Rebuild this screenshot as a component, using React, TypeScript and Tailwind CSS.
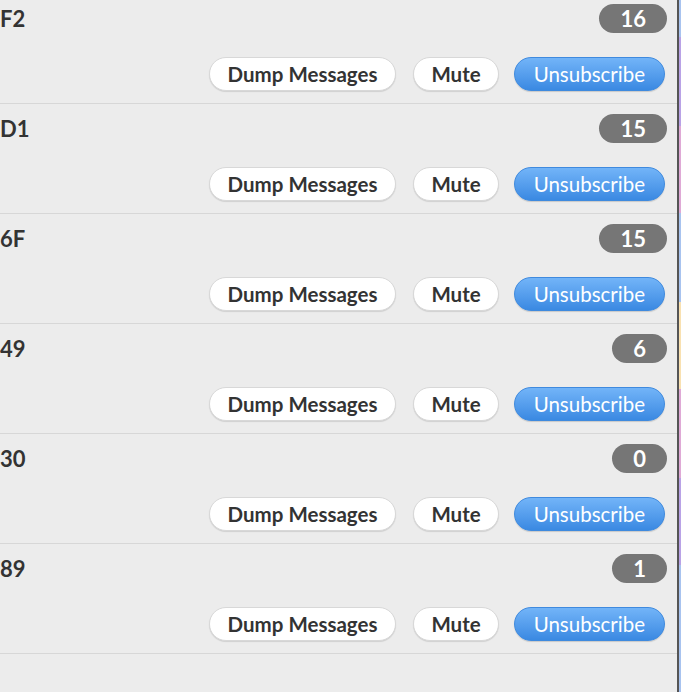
import React from 'react';

const rows = [
  { id: '4071F2', count: 16 },
  { id: '3518D1', count: 15 },
  { id: '92046F', count: 15 },
  { id: '870549', count: 6 },
  { id: '216530', count: 0 },
  { id: '604389', count: 1 },
];

const strip = [
  { h: 'h-[37px]', c: 'bg-[#a8c3ef]' },
  { h: 'h-[89px]', c: 'bg-[#b9a2e6]' },
  { h: 'h-[87px]', c: 'bg-[#dfa9d6]' },
  { h: 'h-[89px]', c: 'bg-[#a8c3ef]' },
  { h: 'h-[87px]', c: 'bg-[#f9e1b1]' },
  { h: 'h-[89px]', c: 'bg-[#dfa9d6]' },
  { h: 'h-[87px]', c: 'bg-[#b9a2e6]' },
  { h: 'flex-1', c: 'bg-[#a8c3ef]' },
];

const Row = ({ id, count }: { id: string; count: number }) => (
  <div className="border-b border-[#d7d7d7] pt-[10px] pb-[12px] pr-[10px]">
    <div className="flex items-center justify-between">
      <span className="-ml-[51px] whitespace-nowrap text-[22px] font-bold leading-none text-[#333]">{id}</span>
      <span className="flex h-[29px] items-center rounded-full bg-[#767676] px-[21px] text-[22px] font-bold leading-none text-white">
        {count}
      </span>
    </div>
    <div className="mt-[24px] flex justify-end pr-[2px]">
      <button className="h-[34px] rounded-full border border-[#d8d8d8] bg-white px-[18px] text-[20.5px] font-bold leading-none text-[#333] shadow-[0_1px_1px_rgba(0,0,0,0.12)]">
        Dump Messages
      </button>
      <button className="ml-[17px] h-[34px] rounded-full border border-[#d8d8d8] bg-white px-[17px] text-[20.5px] font-bold leading-none text-[#333] shadow-[0_1px_1px_rgba(0,0,0,0.12)]">
        Mute
      </button>
      <button className="ml-[15px] h-[34px] rounded-full border border-[#3f8ade] bg-gradient-to-b from-[#72b4f8] to-[#3a89e2] px-[19px] text-[20.5px] leading-none text-white shadow-[0_1px_1px_rgba(0,0,0,0.15)]">
        Unsubscribe
      </button>
    </div>
  </div>
);

export default function App() {
  return (
    <div className="flex h-[692px] w-[681px] overflow-hidden bg-[#ececec] font-['Lato',sans-serif]">
      <div className="flex-1 overflow-hidden">
        <div className="-mt-[6px]">
          {rows.map((r) => (
            <Row key={r.id} {...r} />
          ))}
        </div>
      </div>
      <div className="w-[2px] bg-[#555]" />
      <div className="flex w-[2px] flex-col">
        {strip.map((s, i) => (
          <div key={i} className={`${s.h} ${s.c}`} />
        ))}
      </div>
    </div>
  );
}
